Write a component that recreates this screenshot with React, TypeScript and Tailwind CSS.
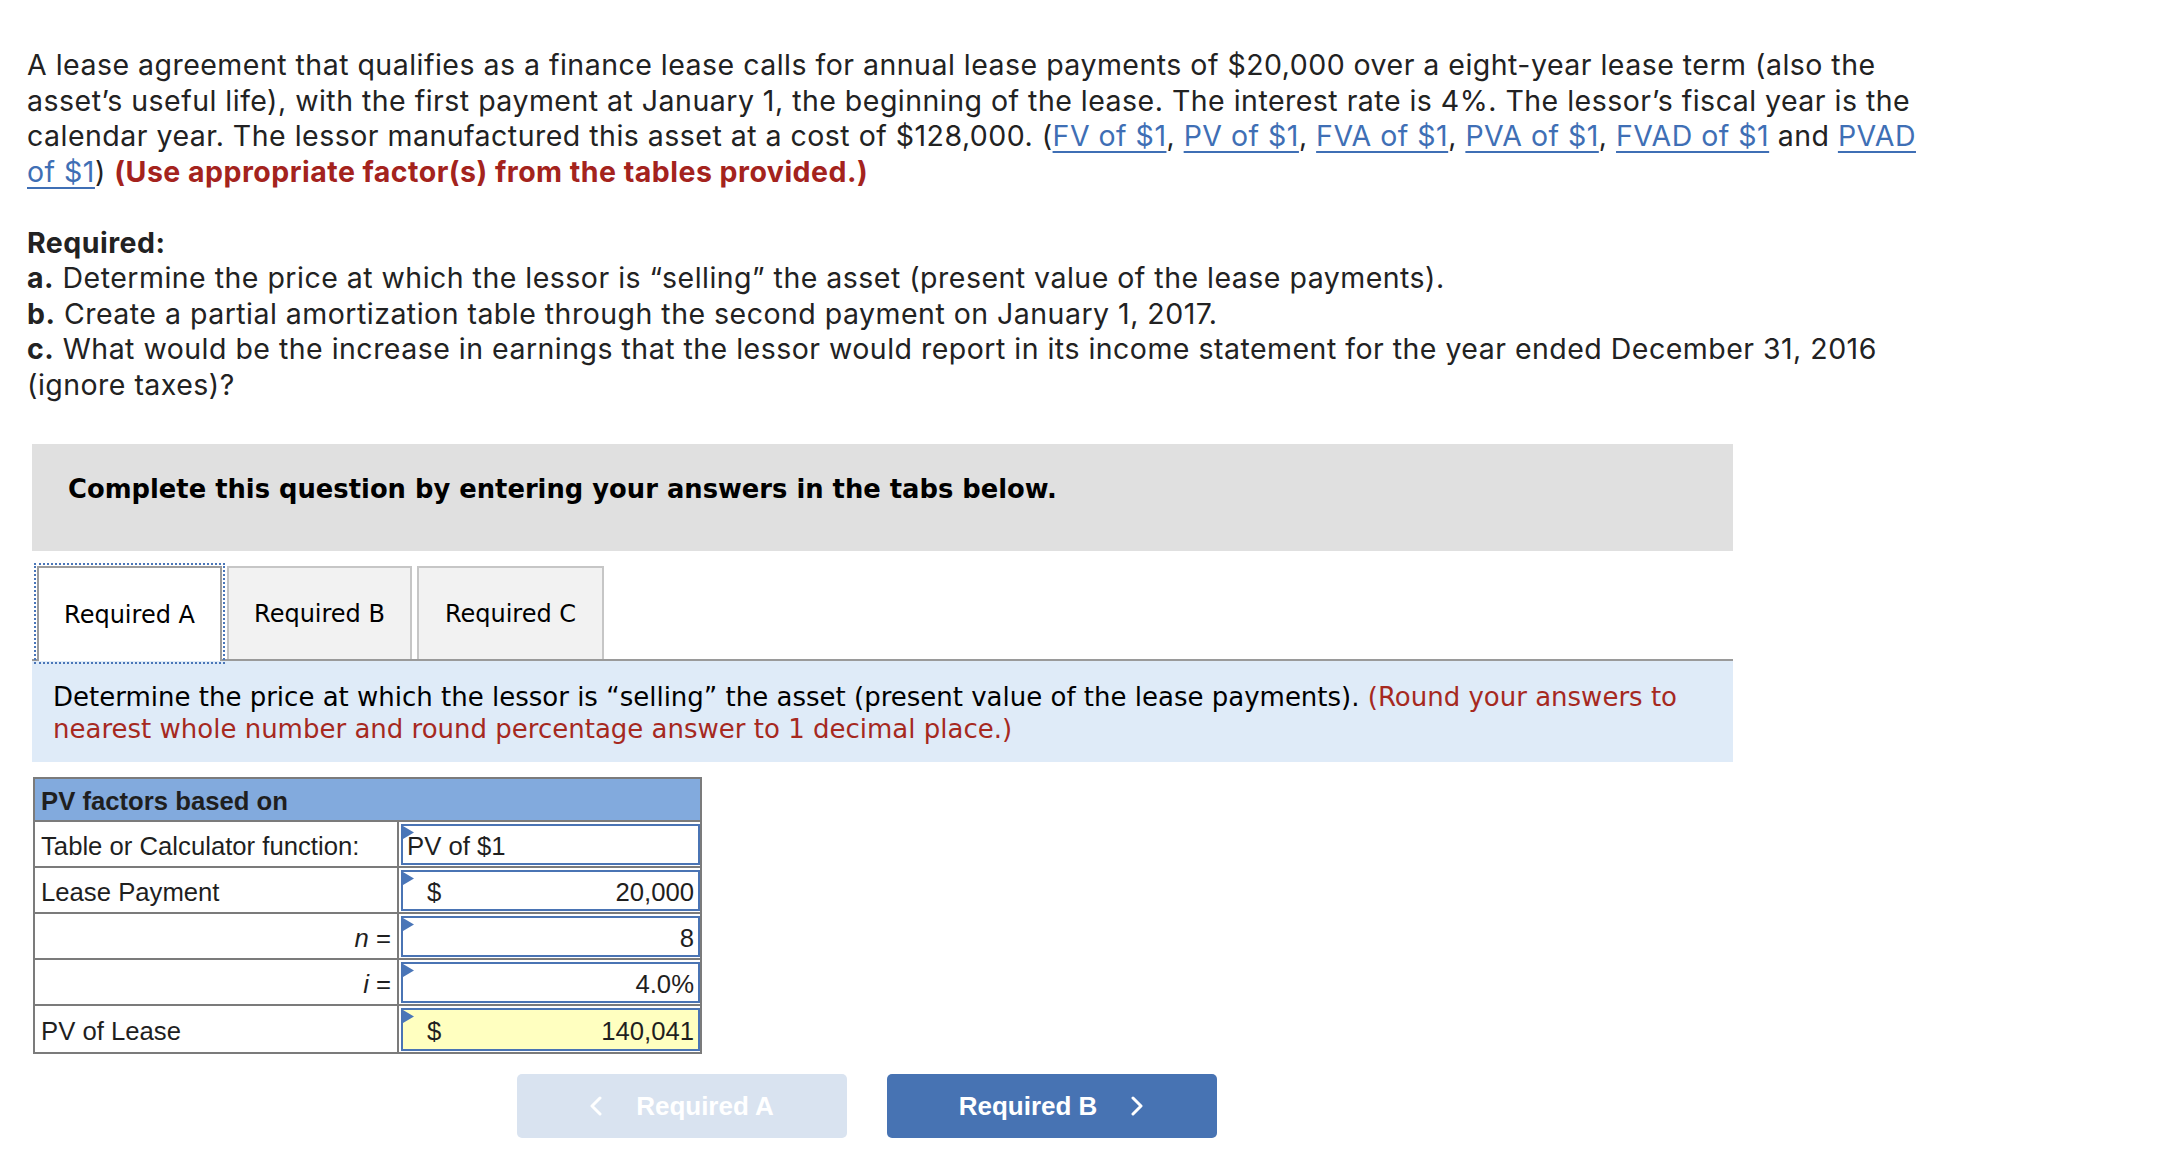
import React from 'react';

const linkCls = 'text-[#3f6fb5] underline decoration-[2px] underline-offset-[5px]';

const Flag = () => (
  <svg className="absolute left-0 top-0" width="11" height="13" viewBox="0 0 11 13">
    <polygon points="0,0 11,6.5 0,13" fill="#4a76b8" />
  </svg>
);

type RowProps = {
  label?: React.ReactNode;
  right?: boolean;
  dollar?: boolean;
  value: string;
  valueLeft?: boolean;
  yellow?: boolean;
  last?: boolean;
};

const Row: React.FC<RowProps> = ({ label, right, dollar, value, valueLeft, yellow, last }) => (
  <div className={`flex h-[46px] ${last ? '' : 'border-b-2 border-[#7b7b7b]'}`}>
    <div
      className={`w-[364px] border-r-2 border-[#7b7b7b] flex items-center px-[6px] pt-[5px] ${right ? 'justify-end' : 'justify-start'}`}
    >
      {label}
    </div>
    <div className="flex-1 pl-[2px] pt-[2px] pb-[1px]">
      <div
        className={`relative h-full border-2 border-[#4a74b4] flex items-center pt-[4px] ${yellow ? 'bg-[#ffffc0]' : 'bg-white'}`}
      >
        <Flag />
        {dollar && <span className="absolute left-[24px]">$</span>}
        <span className={`w-full ${valueLeft ? 'pl-[4px] text-left' : 'pr-[4px] text-right'}`}>{value}</span>
      </div>
    </div>
  </div>
);

const Chevron: React.FC<{ dir: 'left' | 'right' }> = ({ dir }) => (
  <svg width="13" height="20" viewBox="0 0 13 20" fill="none">
    <polyline
      points={dir === 'left' ? '11,2 3,10 11,18' : '2,2 10,10 2,18'}
      stroke="white"
      strokeWidth="3"
      strokeLinecap="round"
      strokeLinejoin="round"
    />
  </svg>
);

export default function App() {
  return (
    <div className="min-h-screen bg-white text-[#222] pb-[20px]">
      {/* Question text */}
      <div className="pl-[27px] pt-[47px] whitespace-nowrap font-['Inter','Lato',sans-serif] text-[28.5px] leading-[35.5px] tracking-[0.48px]">
        <p>
          A lease agreement that qualifies as a finance lease calls for annual lease payments of $20,000 over a eight-year lease term (also the
          <br />
          asset’s useful life), with the first payment at January 1, the beginning of the lease. The interest rate is 4%. The lessor’s fiscal year is the
          <br />
          calendar year. The lessor manufactured this asset at a cost of $128,000. (<a className={linkCls}>FV of $1</a>,{' '}
          <a className={linkCls}>PV of $1</a>, <a className={linkCls}>FVA of $1</a>, <a className={linkCls}>PVA of $1</a>,{' '}
          <a className={linkCls}>FVAD of $1</a> and <a className={linkCls}>PVAD</a>
          <br />
          <a className={linkCls}>of $1</a>){' '}
          <span className="font-bold text-[#a4231d]">(Use appropriate factor(s) from the tables provided.)</span>
        </p>
        <p className="mt-[35.5px]">
          <span className="font-bold">Required:</span>
          <br />
          <span className="font-bold">a.</span> Determine the price at which the lessor is “selling” the asset (present value of the lease payments).
          <br />
          <span className="font-bold">b.</span> Create a partial amortization table through the second payment on January 1, 2017.
          <br />
          <span className="font-bold">c.</span> What would be the increase in earnings that the lessor would report in its income statement for the year ended December 31, 2016
          <br />
          (ignore taxes)?
        </p>
      </div>

      {/* Answer area */}
      <div className="ml-[32px] w-[1701px] mt-[42px]">
        <div className="bg-[#e0e0e0] h-[107px] pl-[36px] pt-[30px] font-['DejaVu_Sans',sans-serif] font-bold text-[25.8px] leading-[30px] text-black">
          Complete this question by entering your answers in the tabs below.
        </div>

        {/* Tabs */}
        <div className="mt-[15px] flex items-end gap-[5px] border-b-2 border-[#9a9a9a] pl-[5px] font-['DejaVu_Sans',sans-serif] text-[24px] text-black">
          <div className="w-[185px] h-[95px] -mb-[2px] bg-white border-2 border-b-0 border-[#9d9d9d] flex items-center justify-center outline-2 outline-dotted outline-[#4a76b8] outline-offset-[1px]">
            Required A
          </div>
          <div className="w-[185px] h-[93px] bg-[#f2f2f2] border-2 border-b-0 border-[#c6c6c6] flex items-center justify-center">
            Required B
          </div>
          <div className="w-[187px] h-[93px] bg-[#f2f2f2] border-2 border-b-0 border-[#c6c6c6] flex items-center justify-center">
            Required C
          </div>
        </div>

        <div className="bg-[#dfebf8] h-[101px] pl-[21px] pt-[20px] font-['DejaVu_Sans',sans-serif] text-[26px] leading-[32px] text-black whitespace-nowrap">
          Determine the price at which the lessor is “selling” the asset (present value of the lease payments).{' '}
          <span className="text-[#a6291f]">
            (Round your answers to
            <br />
            nearest whole number and round percentage answer to 1 decimal place.)
          </span>
        </div>

        {/* PV table */}
        <div className="ml-[1px] mt-[15px] w-[669px] border-2 border-[#7b7b7b] font-['Liberation_Sans',Arial,sans-serif] text-[25.7px] text-[#1f1f1f]">
          <div className="h-[43px] bg-[#82aadd] border-b-2 border-[#7b7b7b] flex items-center px-[6px] pt-[4px] font-bold">
            PV factors based on
          </div>
          <Row label="Table or Calculator function:" value="PV of $1" valueLeft />
          <Row label="Lease Payment" dollar value="20,000" />
          <Row
            right
            label={
              <span>
                <i>n</i> =
              </span>
            }
            value="8"
          />
          <Row
            right
            label={
              <span>
                <i>i</i> =
              </span>
            }
            value="4.0%"
          />
          <Row label="PV of Lease" dollar value="140,041" yellow last />
        </div>

        {/* Navigation */}
        <div className="-ml-[32px] w-[1733px] mt-[20px] flex justify-center gap-[40px] font-['Liberation_Sans',Arial,sans-serif] font-bold text-[26px] text-white">
          <button className="w-[330px] h-[64px] rounded-[5px] bg-[#d9e3f0] flex items-center justify-center gap-[34px]">
            <Chevron dir="left" />
            <span>Required A</span>
          </button>
          <button className="w-[330px] h-[64px] rounded-[5px] bg-[#4773b3] flex items-center justify-center gap-[34px]">
            <span>Required B</span>
            <Chevron dir="right" />
          </button>
        </div>
      </div>
    </div>
  );
}
